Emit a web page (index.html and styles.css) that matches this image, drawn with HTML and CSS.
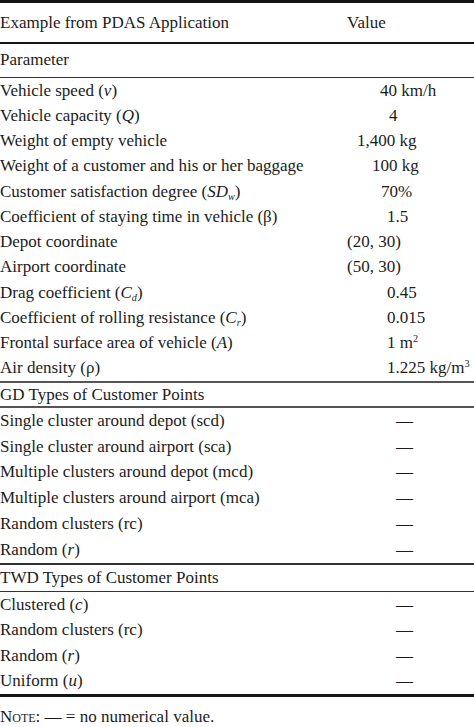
FILE: index.html
```html
<!DOCTYPE html>
<html>
<head>
<meta charset="utf-8">
<link rel="stylesheet" href="styles.css">
</head>
<body>
<table class="params">
  <thead>
    <tr class="head-row">
      <th class="col-name">Example from PDAS Application</th>
      <th class="col-val">Value</th>
    </tr>
  </thead>
  <tbody class="grp grp-param">
    <tr class="grp-head param-head"><td colspan="2">Parameter</td></tr>
    <tr class="row"><td>Vehicle speed (<i>v</i>)</td><td><span class="off-33">40 km/h</span></td></tr>
    <tr class="row"><td>Vehicle capacity (<i>Q</i>)</td><td><span class="off-41">4</span></td></tr>
    <tr class="row"><td>Weight of empty vehicle</td><td><span class="off-10">1,400 kg</span></td></tr>
    <tr class="row"><td>Weight of a customer and his or her baggage</td><td><span class="off-25">100 kg</span></td></tr>
    <tr class="row"><td>Customer satisfaction degree (<i>SD<sub>w</sub></i>)</td><td><span class="off-34">70%</span></td></tr>
    <tr class="row"><td>Coefficient of staying time in vehicle (β)</td><td><span class="off-40">1.5</span></td></tr>
    <tr class="row"><td>Depot coordinate</td><td><span class="off-0">(20, 30)</span></td></tr>
    <tr class="row"><td>Airport coordinate</td><td><span class="off-0">(50, 30)</span></td></tr>
    <tr class="row"><td>Drag coefficient (<i>C<sub>d</sub></i>)</td><td><span class="off-40">0.45</span></td></tr>
    <tr class="row"><td>Coefficient of rolling resistance (<i>C<sub>r</sub></i>)</td><td><span class="off-40">0.015</span></td></tr>
    <tr class="row"><td>Frontal surface area of vehicle (<i>A</i>)</td><td><span class="off-40">1 m<sup>2</sup></span></td></tr>
    <tr class="row"><td>Air density (ρ)</td><td><span class="off-40">1.225 kg/m<sup>3</sup></span></td></tr>
  </tbody>
  <tbody class="grp grp-gd">
    <tr class="grp-head gd-head"><td colspan="2">GD Types of Customer Points</td></tr>
    <tr class="row row-gd"><td>Single cluster around depot (scd)</td><td><span class="off-49">—</span></td></tr>
    <tr class="row row-gd"><td>Single cluster around airport (sca)</td><td><span class="off-49">—</span></td></tr>
    <tr class="row row-gd"><td>Multiple clusters around depot (mcd)</td><td><span class="off-49">—</span></td></tr>
    <tr class="row row-gd"><td>Multiple clusters around airport (mca)</td><td><span class="off-49">—</span></td></tr>
    <tr class="row row-gd"><td>Random clusters (rc)</td><td><span class="off-49">—</span></td></tr>
    <tr class="row row-gd"><td>Random (<i>r</i>)</td><td><span class="off-49">—</span></td></tr>
  </tbody>
  <tbody class="grp grp-twd">
    <tr class="grp-head twd-head"><td colspan="2">TWD Types of Customer Points</td></tr>
    <tr class="row row-twd"><td>Clustered (<i>c</i>)</td><td><span class="off-49">—</span></td></tr>
    <tr class="row row-twd"><td>Random clusters (rc)</td><td><span class="off-49">—</span></td></tr>
    <tr class="row row-twd"><td>Random (<i>r</i>)</td><td><span class="off-49">—</span></td></tr>
    <tr class="row row-twd"><td>Uniform (<i>u</i>)</td><td><span class="off-49">—</span></td></tr>
  </tbody>
</table>
<p class="note"><span class="sc">Note</span>: — = no numerical value.</p>
</body>
</html>
```
FILE: styles.css
```css
html, body {
  margin: 0;
  padding: 0;
  background: #ffffff;
}
body {
  color: #1c1c1c;
  font-family: "Liberation Serif", "Times New Roman", serif;
  font-size: 17px;
  width: 474px;
}
.params {
  border-collapse: collapse;
  width: 474px;
  table-layout: fixed;
}
.params th,
.params td {
  padding: 0;
  font-weight: normal;
  text-align: left;
  vertical-align: middle;
  white-space: nowrap;
  line-height: 18px;
}
.col-name { width: 347px; }
.col-val { width: 127px; }

.head-row {
  border-top: 3px solid #151515;
  border-bottom: 2px solid #151515;
}
.head-row th { height: 39px; }

.param-head { border-bottom: 1px solid #333; }
.param-head td { height: 32px; padding-bottom: 1px; }

.row td { height: 25.25px; }
.row-gd td { height: 25.8px; }
.row-twd td { height: 25.6px; }

.grp-gd { border-top: 2px solid #555; }
.gd-head { border-bottom: 2px solid #555; }
.gd-head td { height: 23px; }

.grp-twd { border-top: 2px solid #333; }
.twd-head { border-bottom: 1px solid #333; }
.twd-head td { height: 26px; }

.grp-twd { border-bottom: 3px solid #151515; }

.params i { font-style: italic; }
.params sub {
  font-size: 0.6em;
  vertical-align: -0.25em;
  line-height: 0;
}
.params sup {
  font-size: 0.6em;
  vertical-align: 0.55em;
  line-height: 0;
}

.off-0 { padding-left: 0; }
.off-10 { padding-left: 10px; }
.off-25 { padding-left: 25px; }
.off-33 { padding-left: 33px; }
.off-34 { padding-left: 34px; }
.off-40 { padding-left: 40px; }
.off-41 { padding-left: 42px; }
.off-49 { padding-left: 49px; }

.note {
  margin: 11px 0 0 0;
  font-size: 17px;
  line-height: 18px;
}
.sc { font-variant: small-caps; }
```
